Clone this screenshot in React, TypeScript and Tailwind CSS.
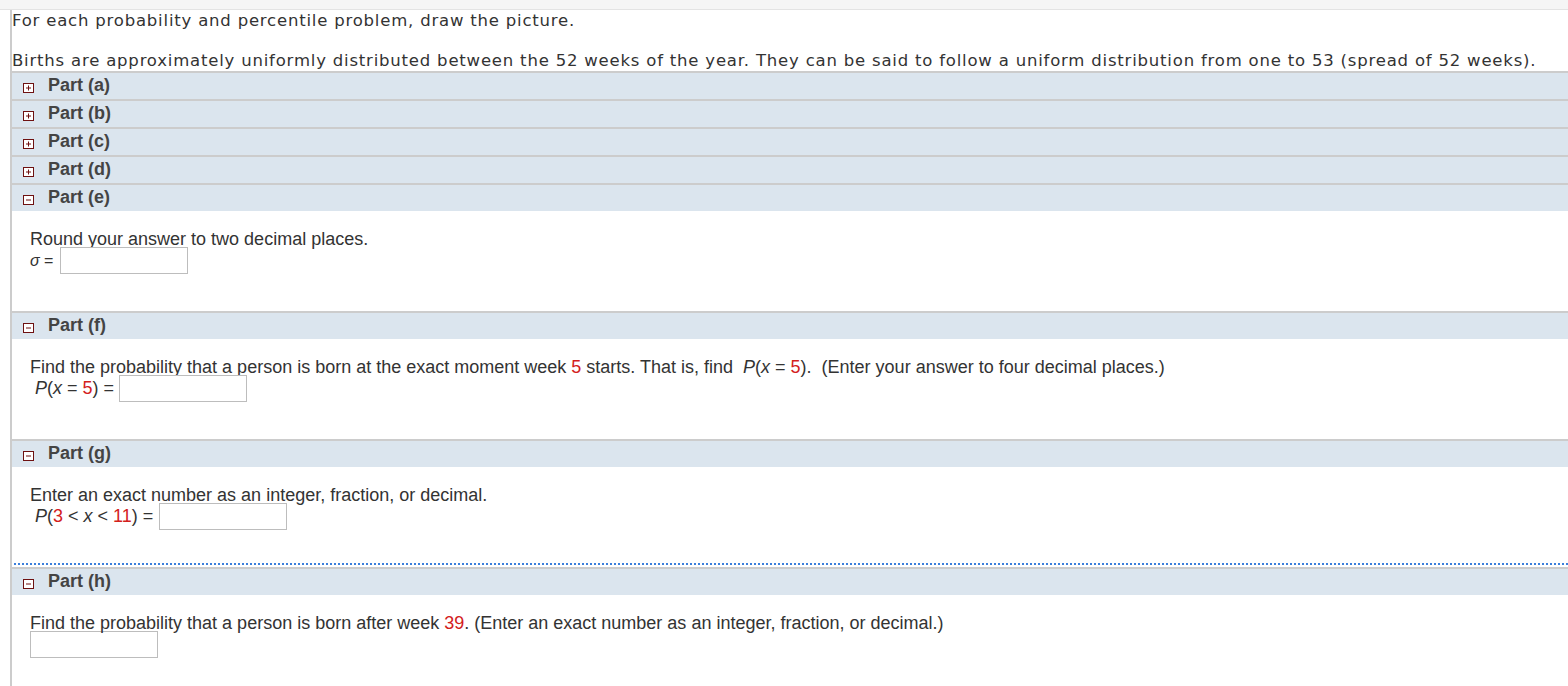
import React from 'react';

const sans = { fontFamily: '"Liberation Sans", Arial, sans-serif' };

function Icon({ open }: { open: boolean }) {
  return (
    <svg width="11" height="10" viewBox="0 0 11 10" className="mt-[4px] shrink-0">
      <rect x="0.5" y="0.5" width="10" height="9" fill="#ffffff" stroke="#6e1111" />
      <line x1="3" y1="5" x2="8" y2="5" stroke="#6e1111" strokeWidth="1" />
      {!open && <line x1="5.5" y1="2.5" x2="5.5" y2="7.5" stroke="#6e1111" strokeWidth="1" />}
    </svg>
  );
}

function Header({ label, open }: { label: string; open: boolean }) {
  return (
    <div className="h-[28px] border-t-2 border-[#cccccc] bg-[#dbe5ee] flex items-center pl-[11px]">
      <Icon open={open} />
      <span className="ml-[14px] text-[18px] font-bold text-[#444444] leading-[26px] -mt-[2px]" style={sans}>
        {label}
      </span>
    </div>
  );
}

function Box() {
  return <div className="w-[128px] h-[27px] border border-[#bdbdbd] bg-white shrink-0" />;
}

function Red({ children }: { children: React.ReactNode }) {
  return <span className="text-[#d3201c]">{children}</span>;
}

export default function App() {
  return (
    <div className="min-h-screen bg-white text-[#333333]">
      <div className="h-[10px] bg-[#f5f5f5] border-b border-[#e3e3e3]" />
      <div className="ml-[10px] border-l-2 border-[#cccccc] min-h-[676px]">
        <div className="pt-[1px] text-[16.5px] leading-[20px] tracking-[0.8px] text-[#333333]" style={{ fontFamily: 'Verdana, "DejaVu Sans", sans-serif' }}>
          <p>For each probability and percentile problem, draw the picture.</p>
          <p className="mt-[20px] whitespace-nowrap">
            Births are approximately uniformly distributed between the 52 weeks of the year. They can be said to follow a uniform distribution from one to 53 (spread of 52 weeks).
          </p>
        </div>

        <Header label="Part (a)" open={false} />
        <Header label="Part (b)" open={false} />
        <Header label="Part (c)" open={false} />
        <Header label="Part (d)" open={false} />

        <Header label="Part (e)" open />
        <div className="h-[100px] pl-[18px] pt-[19px] text-[18px]" style={sans}>
          <div className="leading-[18px]">Round your answer to two decimal places.</div>
          <div className="flex items-center -mt-[1px]">
            <span className="mr-[7px] text-[16px]"><span className="italic">σ</span> =</span>
            <Box />
          </div>
        </div>

        <Header label="Part (f)" open />
        <div className="h-[100px] pl-[18px] pt-[19px] text-[18px]" style={sans}>
          <div className="leading-[18px] whitespace-pre">
            Find the probability that a person is born at the exact moment week <Red>5</Red> starts. That is, find  <span className="italic">P</span>(<span className="italic">x</span> = <Red>5</Red>).  (Enter your answer to four decimal places.)
          </div>
          <div className="flex items-center -mt-[1px] pl-[5px]">
            <span className="mr-[5px]"><span className="italic">P</span>(<span className="italic">x</span> = <Red>5</Red>) =</span>
            <Box />
          </div>
        </div>

        <Header label="Part (g)" open />
        <div className="h-[100px] pl-[18px] pt-[19px] text-[18px]" style={sans}>
          <div className="h-[77px]">
            <div className="leading-[18px]">Enter an exact number as an integer, fraction, or decimal.</div>
            <div className="flex items-center -mt-[1px] pl-[5px]">
              <span className="mr-[6px]"><span className="italic">P</span>(<Red>3</Red> &lt; <span className="italic">x</span> &lt; <Red>11</Red>) =</span>
              <Box />
            </div>
          </div>
        </div>
        <div className="-mt-[4px] mb-[2px] ml-[2px] border-b-2 border-dotted border-[#3b7fdb]" />

        <Header label="Part (h)" open />
        <div className="h-[91px] pl-[18px] pt-[19px] text-[18px]" style={sans}>
          <div className="leading-[18px]">
            Find the probability that a person is born after week <Red>39</Red>. (Enter an exact number as an integer, fraction, or decimal.)
          </div>
          <div className="-mt-[1px]">
            <Box />
          </div>
        </div>
      </div>
    </div>
  );
}
